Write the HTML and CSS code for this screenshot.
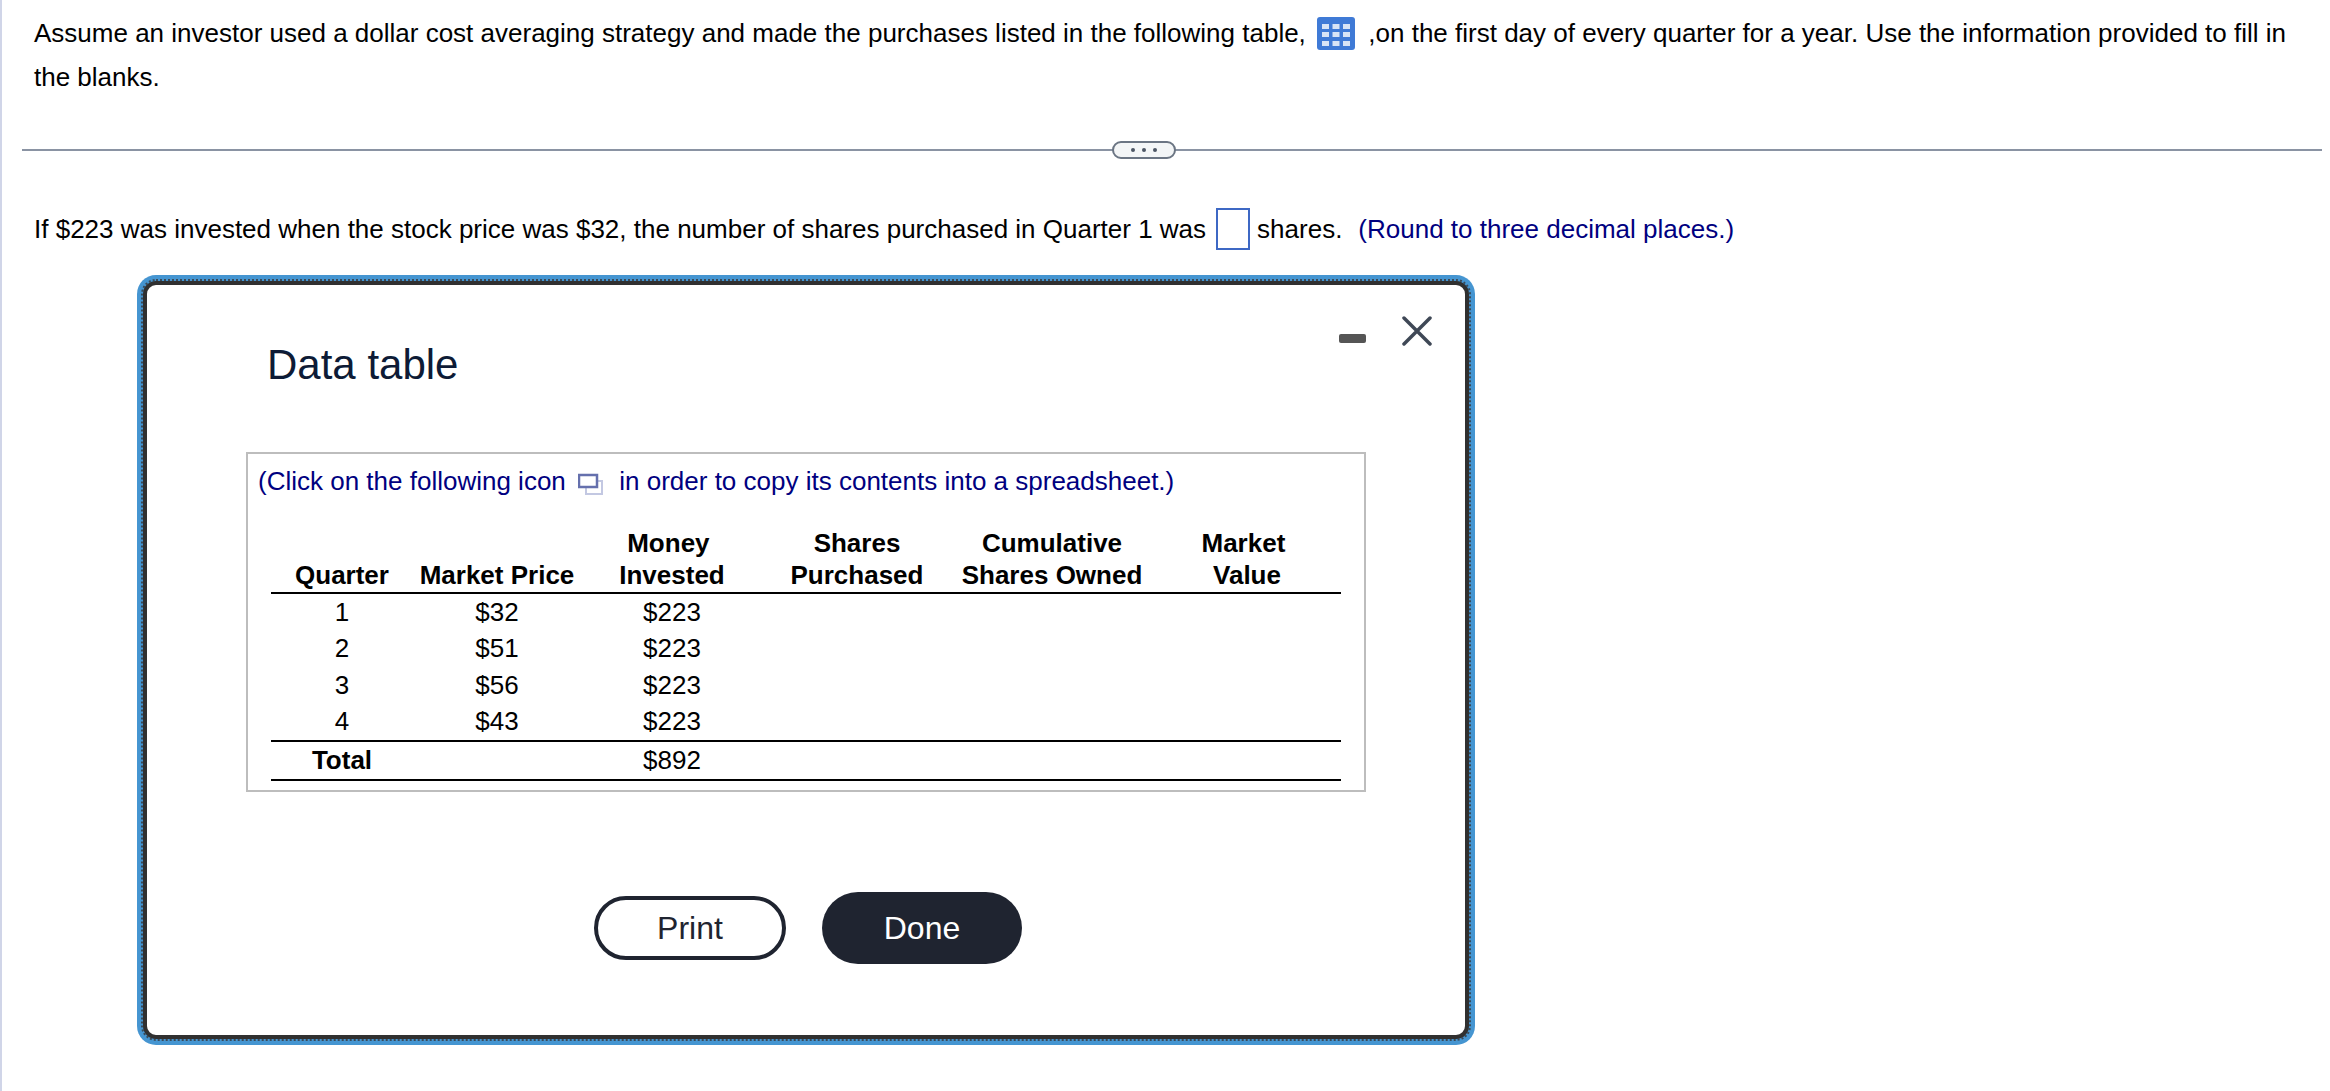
FILE: index.html
```html
<!DOCTYPE html>
<html lang="en">
  <head>
    <meta charset="UTF-8" />
    <title>Data table</title>
    <link rel="stylesheet" href="styles.css">
  </head>
  <body>
    <div class="page">
      <p class="question">
        Assume an investor used a dollar cost averaging strategy and made the purchases listed in the following table,
        <svg class="table-icon" viewBox="0 0 38 33" aria-hidden="true">
          <rect width="38" height="33" rx="3" fill="#3f7ad6" />
          <g fill="#fff" opacity="0.8">
            <rect x="5" y="7" width="7" height="5" />
            <rect x="15.500" y="7" width="7" height="5" />
            <rect x="26" y="7" width="7" height="5" />
            <rect x="5" y="15" width="7" height="5" />
            <rect x="15.500" y="15" width="7" height="5" />
            <rect x="26" y="15" width="7" height="5" />
            <rect x="5" y="24" width="7" height="5" />
            <rect x="15.500" y="24" width="7" height="5" />
            <rect x="26" y="24" width="7" height="5" />
          </g>
        </svg>
        ,on the first day of every quarter for a year. Use the information provided to fill in the blanks.
      </p>

      <div class="divider">
        <div class="more-pill"><span></span><span></span><span></span></div>
      </div>

      <p class="fill-in">
        If $223 was invested when the stock price was $32, the number of shares purchased in Quarter 1 was
        <span class="answer-box"></span>
        shares.
        <span class="hint">(Round to three decimal places.)</span>
      </p>

      <div class="modal">
        <div class="modal-inner">
          <div class="modal-head">
            <h1>Data table</h1>
            <div class="modal-controls">
              <span class="minimize"></span>
              <svg class="close" viewBox="0 0 30 30" aria-hidden="true">
                <path d="M2 2L28 28M28 2L2 28" stroke="#3f4856" stroke-width="3.500" stroke-linecap="round" fill="none" />
              </svg>
            </div>
          </div>

          <div class="table-box">
            <div class="table-note">
              (Click on the following icon
              <svg class="copy-icon" viewBox="0 0 25 22" aria-hidden="true">
                <rect x="8" y="8" width="16" height="13" fill="#fff" stroke="#c3c8e2" stroke-width="2" />
                <rect x="1" y="2" width="18" height="12" fill="#fff" stroke="#6570ad" stroke-width="2.500" />
              </svg>
              in order to copy its contents into a spreadsheet.)
            </div>
            <table>
              <thead>
                <tr>
                  <th>Quarter</th>
                  <th>Market Price</th>
                  <th>Money&nbsp;<br />Invested</th>
                  <th>Shares<br />Purchased</th>
                  <th>Cumulative<br />Shares Owned</th>
                  <th>Market&nbsp;<br />Value</th>
                </tr>
              </thead>
              <tbody>
                <tr><td>1</td><td>$32</td><td>$223</td><td></td><td></td><td></td></tr>
                <tr><td>2</td><td>$51</td><td>$223</td><td></td><td></td><td></td></tr>
                <tr><td>3</td><td>$56</td><td>$223</td><td></td><td></td><td></td></tr>
                <tr><td>4</td><td>$43</td><td>$223</td><td></td><td></td><td></td></tr>
                <tr class="total"><td>Total</td><td></td><td>$892</td><td></td><td></td><td></td></tr>
              </tbody>
            </table>
          </div>

          <div class="modal-buttons">
            <button class="print-btn">Print</button>
            <button class="done-btn">Done</button>
          </div>
        </div>
      </div>
    </div>
  </body>
</html>
```

FILE: styles.css
```css
html,
body {
  margin: 0;
  padding: 0;
  background-color: #fff;
}
body {
  font-family: "Liberation Sans", Arial, sans-serif;
  font-size: 26px;
  color: #000;
  overflow: hidden;
}
.page {
  height: 1091px;
  box-sizing: border-box;
  border-left: 2px solid #d0d5e8;
  padding: 11px 8px 0 20px;
}
.question {
  margin: 0 0 0 12px;
  width: 2270px;
  line-height: 44px;
}
.table-icon {
  width: 38px;
  height: 33px;
  vertical-align: -8px;
  margin: 0 6px 0 4px;
}
.divider {
  height: 2px;
  margin-top: 50px;
  background-color: #8a93a3;
  display: flex;
  align-items: center;
}
.more-pill {
  flex: none;
  width: 64px;
  height: 18px;
  box-sizing: border-box;
  margin-left: 1090px;
  border: 2px solid #6b7583;
  border-radius: 9px;
  background-color: #f3f5f6;
  display: flex;
  justify-content: center;
  align-items: center;
  gap: 7px;
}
.more-pill span {
  width: 4px;
  height: 4px;
  border-radius: 50%;
  background-color: #4c5564;
}
.fill-in {
  margin: 56px 0 0 12px;
  line-height: 44px;
  display: flex;
  align-items: center;
  gap: 7px;
  white-space: nowrap;
}
.answer-box {
  width: 34px;
  height: 42px;
  box-sizing: border-box;
  margin-left: 3px;
  border: 2px solid #3d68c4;
  background-color: #fff;
}
.hint {
  color: #000080;
  margin-left: 9px;
}
.modal {
  width: 1330px;
  height: 762px;
  box-sizing: border-box;
  margin: 28px 0 0 119px;
  border: 2px dotted #3a4a58;
  border-radius: 15px;
  background-color: #4595d1;
  box-shadow: 0 0 0 4px #4595d1;
}
.modal-inner {
  height: 100%;
  box-sizing: border-box;
  border: 4px solid #303030;
  border-radius: 13px;
  background-color: #fff;
  padding-left: 99px;
}
.modal-head {
  height: 167px;
  display: flex;
  justify-content: space-between;
  padding: 0 33px 0 21px;
  box-sizing: border-box;
}
.modal-head h1 {
  margin: 54px 0 0;
  font-size: 42px;
  font-weight: 400;
  line-height: 52px;
  color: #0d1b36;
}
.modal-controls {
  display: flex;
  align-items: flex-start;
  gap: 36px;
  padding-top: 31px;
}
.minimize {
  width: 27px;
  height: 9px;
  margin-top: 18px;
  border-radius: 2px;
  background-color: #555;
}
.close {
  width: 30px;
  height: 30px;
}
.table-box {
  width: 1120px;
  height: 340px;
  box-sizing: border-box;
  border: 2px solid #bdbdbd;
  padding: 8px 23px 0;
}
.table-note {
  margin-left: -13px;
  line-height: 38px;
  color: #000080;
  white-space: nowrap;
}
.copy-icon {
  width: 25px;
  height: 22px;
  vertical-align: -5px;
  margin: 0 9px 0 5px;
}
table {
  width: 1070px;
  border-collapse: collapse;
  table-layout: fixed;
  margin-top: 27px;
}
th,
td {
  padding: 0;
  text-align: center;
  line-height: 31px;
}
th {
  font-weight: 700;
  line-height: 32px;
  vertical-align: bottom;
  border-bottom: 2px solid #000;
  padding-bottom: 1px;
}
td {
  height: 36.500px;
}
th:nth-child(1) { width: 142px; }
th:nth-child(2) { width: 168px; }
th:nth-child(3) { width: 182px; }
th:nth-child(4) { width: 188px; }
th:nth-child(5) { width: 202px; }
th:nth-child(6) { width: 188px; }
.total td {
  border-top: 2px solid #000;
  border-bottom: 2px solid #000;
}
.total td:first-child {
  font-weight: 700;
}
.modal-buttons {
  display: flex;
  align-items: center;
  gap: 36px;
  margin: 100px 0 0 348px;
}
.modal-buttons button {
  font-family: "Liberation Sans", Arial, sans-serif;
  font-size: 32px;
  cursor: pointer;
}
.print-btn {
  width: 192px;
  height: 64px;
  border: 4px solid #1f2430;
  border-radius: 32px;
  background-color: #fff;
  color: #1f2430;
}
.done-btn {
  width: 200px;
  height: 72px;
  border: none;
  border-radius: 36px;
  background-color: #1f2430;
  color: #fff;
}
```
